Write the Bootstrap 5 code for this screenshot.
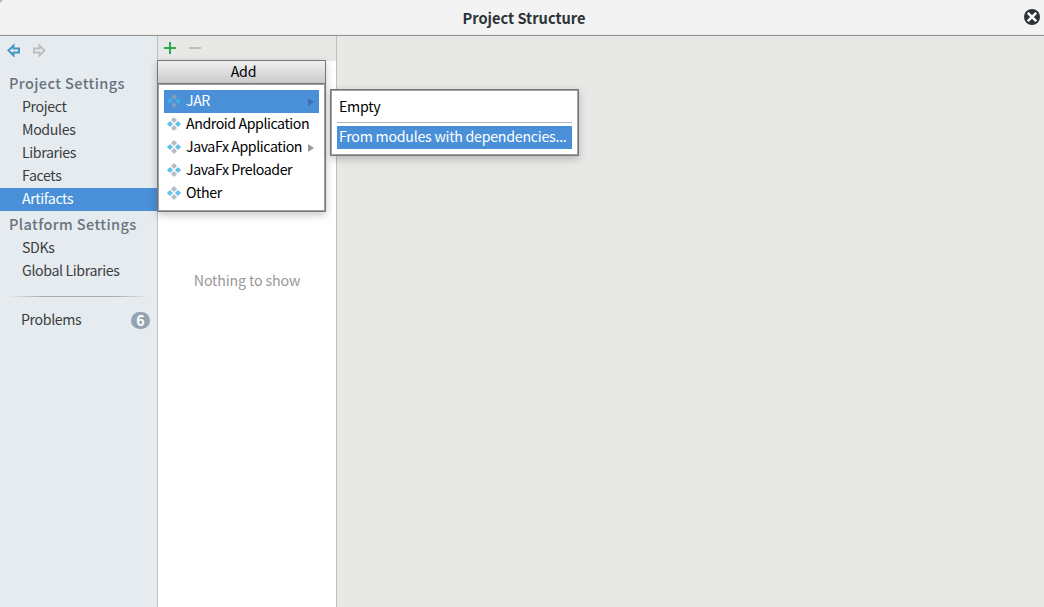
<!DOCTYPE html>
<html lang="en">
<head>
  <meta charset="UTF-8" />
  <meta name="viewport" content="width=device-width, initial-scale=1.0"/>
  <title>Project Structure</title>
  <link href="https://cdn.jsdelivr.net/npm/bootstrap@5.3.0/dist/css/bootstrap.min.css" rel="stylesheet"/>
  <style>
    body { font-family: "Noto Sans CJK SC", "Noto Sans", sans-serif; font-size: 14.2px; letter-spacing: -.38px; line-height: 21px; color: #3a3d40; background: #e8e8e6; }
    .title-bar { height: 36px; background: #f3f3f3; border-bottom: 1px solid #949492; box-shadow: inset 0 -1px #e9e9e8; color: #2e3436; font-size: 14.6px; letter-spacing: 0; }
    .corner { top: 0; left: 0; }
    .close-btn { top: 9px; right: 4px; }
    .sidebar { width: 158px; background: #e6ebef; border-right: 1px solid #c0c0c0; }
    .nav-arrows { height: 37px; padding: 7px 0 0 7px; gap: 12px; }
    .group-title { padding-left: 9px; color: #67737f; font-weight: 500; font-size: 14.5px; height: 23px; line-height: 19px; letter-spacing: .4px; }
    .group-title.platform { height: 26px; padding-top: 3px; }
    .side-item { padding-left: 22px; height: 23px; }
    .side-item.selected { background: #4a90d9; color: #fff; }
    .divider { height: 1px; margin: 13px 8px 12px; background: linear-gradient(90deg, transparent, #aaa 25%, #aaa 75%, transparent); }
    .problems { padding-left: 21px; }
    .problems-label { padding-bottom: 2px; }
    .count { width: 19px; height: 17px; border-radius: 9px; background: #96a3b0; color: #fff; font-weight: 700; line-height: 16px; margin-right: 7px; letter-spacing: 0; }
    .list-pane { width: 179px; background: #fff; border-right: 1px solid #c0c0c0; }
    .tools { height: 25px; background: #e8e8e6; padding: 6px 0 0 6px; gap: 13px; }
    .empty-text { margin-top: 209px; color: #999; letter-spacing: -.13px; }
    .popup { background: #fff; border: 1px solid #777; box-shadow: 0 3px 8px rgba(0,0,0,.22); color: #000; }
    .popup-body { border: 1px solid #a0a0a0; padding: 5px; }
    .add-menu { top: 60px; left: 157px; width: 169px; height: 152px; }
    .popup-title { height: 23px; line-height: 21px; background: linear-gradient(#f0f0f0, #cbcbcb); border-bottom: 1px solid #777; padding-left: 4px; letter-spacing: -.2px; }
    .menu-row { height: 23px; padding: 0 5px 0 3px; gap: 5px; white-space: nowrap; letter-spacing: -.43px; }
    .menu-row span { padding-bottom: 2px; }
    .menu-row .diamonds { margin-bottom: 1px; }
    .menu-row.selected { background: #4a90d9; color: #fff; }
    .menu-row.selected .grey { fill: #7f9dbd; }
    .menu-row.selected .blue { fill: #44abe0; }
    .grey { fill: #b5bcc3; }
    .blue { fill: #62c2e8; }
    .sub-menu { top: 89px; left: 330px; width: 249px; height: 67px; }
    .sub-row { height: 23px; padding-left: 2px; white-space: nowrap; letter-spacing: -.25px; }
    .sub-row.selected { background: #4a90d9; color: #fff; }
    .sub-line { height: 1px; margin: 3px 0; background: #b4b4b4; }
  </style>
</head>
<body class="vh-100 overflow-hidden d-flex flex-column position-relative">
  <header class="title-bar position-relative d-flex justify-content-center align-items-center fw-bold flex-shrink-0">
    <svg class="corner position-absolute" width="3" height="3"><path d="M0 0h3L0 3z" fill="#b5b5b5"/></svg>
    <span class="title-text ps-1">Project Structure</span>
    <svg class="close-btn position-absolute" width="16" height="16" viewBox="0 0 16 16">
      <circle cx="8" cy="8" r="8" fill="#2e3436"/>
      <path d="M3.8 3.8l8.4 8.4M12.2 3.8l-8.4 8.4" stroke="#fff" stroke-width="2.5"/>
    </svg>
  </header>

  <main class="d-flex flex-grow-1">
    <nav class="sidebar flex-shrink-0">
      <div class="nav-arrows d-flex">
        <svg width="14" height="14" viewBox="0 0 14 14"><path d="M1.5 7.5L6.5 2.6v2.9H12v4H6.5v2.9z" fill="none" stroke="#4596c8" stroke-width="2"/></svg>
        <svg width="14" height="14" viewBox="0 0 14 14"><path d="M11.5 7.5L6.5 2.6v2.9H1v4h5.5v2.9z" fill="none" stroke="#bdbdbd" stroke-width="2"/></svg>
      </div>
      <div class="group-title">Project Settings</div>
      <div class="side-item">Project</div>
      <div class="side-item">Modules</div>
      <div class="side-item">Libraries</div>
      <div class="side-item">Facets</div>
      <div class="side-item selected">Artifacts</div>
      <div class="group-title platform">Platform Settings</div>
      <div class="side-item">SDKs</div>
      <div class="side-item">Global Libraries</div>
      <div class="divider"></div>
      <div class="side-item problems d-flex justify-content-between align-items-center"><span class="problems-label">Problems</span><span class="count text-center">6</span></div>
    </nav>

    <section class="list-pane flex-shrink-0">
      <div class="tools d-flex">
        <svg width="12" height="12"><path d="M6 0v12M0 6h12" stroke="#2fa84f" stroke-width="2"/></svg>
        <svg width="12" height="12"><path d="M0 6h12" stroke="#bdbdbb" stroke-width="2"/></svg>
      </div>
      <div class="empty-text text-center">Nothing to show</div>
    </section>
  </main>

  <div class="popup add-menu position-absolute d-flex flex-column">
    <div class="popup-title text-center flex-shrink-0">Add</div>
    <div class="popup-body flex-grow-1" id="addItems"></div>
  </div>

  <div class="popup sub-menu position-absolute">
    <div class="popup-body h-100">
      <div class="sub-row">Empty</div>
      <div class="sub-line"></div>
      <div class="sub-row selected">From modules with dependencies...</div>
    </div>
  </div>

  <script src="https://cdn.jsdelivr.net/npm/bootstrap@5.3.0/dist/js/bootstrap.bundle.min.js"></script>
  <script>
    const items = [
      { label: 'JAR', arrow: '#3f6fb8', selected: true },
      { label: 'Android Application' },
      { label: 'JavaFx Application', arrow: '#999' },
      { label: 'JavaFx Preloader' },
      { label: 'Other' }
    ];

    // four rounded diamonds: grey top/bottom, blue left/right
    const diamond = (cls, x, y) =>
      `<rect class="${cls}" x="${x - 2.2}" y="${y - 2.2}" width="4.4" height="4.4" rx="0.7" transform="rotate(45 ${x} ${y})"/>`;
    const icon = `<svg class="diamonds" width="14" height="14">
      ${diamond('grey', 7, 3)}${diamond('grey', 7, 11)}${diamond('blue', 3, 7)}${diamond('blue', 11, 7)}</svg>`;

    document.getElementById('addItems').innerHTML = items.map(item => `
      <div class="menu-row d-flex align-items-center ${item.selected ? 'selected' : ''}">
        ${icon}<span>${item.label}</span>
        ${item.arrow ? `<svg class="ms-auto" width="6" height="8"><path d="M0 0l6 4-6 4z" fill="${item.arrow}"/></svg>` : ''}
      </div>`).join('');
  </script>
</body>
</html>
